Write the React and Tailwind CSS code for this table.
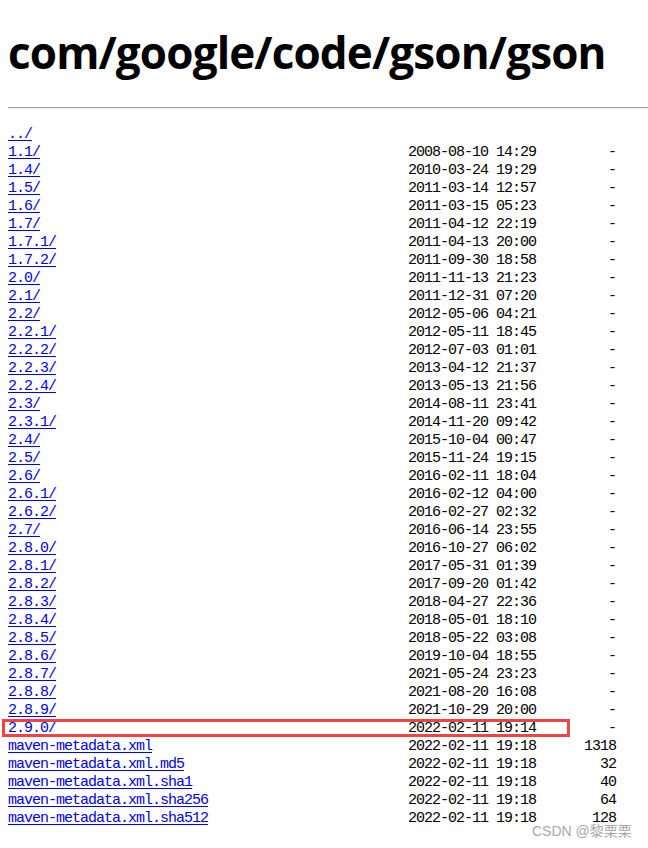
import React from 'react';

const rows = [
  ['../', '', ''],
  ['1.1/', '2008-08-10 14:29', '-'],
  ['1.4/', '2010-03-24 19:29', '-'],
  ['1.5/', '2011-03-14 12:57', '-'],
  ['1.6/', '2011-03-15 05:23', '-'],
  ['1.7/', '2011-04-12 22:19', '-'],
  ['1.7.1/', '2011-04-13 20:00', '-'],
  ['1.7.2/', '2011-09-30 18:58', '-'],
  ['2.0/', '2011-11-13 21:23', '-'],
  ['2.1/', '2011-12-31 07:20', '-'],
  ['2.2/', '2012-05-06 04:21', '-'],
  ['2.2.1/', '2012-05-11 18:45', '-'],
  ['2.2.2/', '2012-07-03 01:01', '-'],
  ['2.2.3/', '2013-04-12 21:37', '-'],
  ['2.2.4/', '2013-05-13 21:56', '-'],
  ['2.3/', '2014-08-11 23:41', '-'],
  ['2.3.1/', '2014-11-20 09:42', '-'],
  ['2.4/', '2015-10-04 00:47', '-'],
  ['2.5/', '2015-11-24 19:15', '-'],
  ['2.6/', '2016-02-11 18:04', '-'],
  ['2.6.1/', '2016-02-12 04:00', '-'],
  ['2.6.2/', '2016-02-27 02:32', '-'],
  ['2.7/', '2016-06-14 23:55', '-'],
  ['2.8.0/', '2016-10-27 06:02', '-'],
  ['2.8.1/', '2017-05-31 01:39', '-'],
  ['2.8.2/', '2017-09-20 01:42', '-'],
  ['2.8.3/', '2018-04-27 22:36', '-'],
  ['2.8.4/', '2018-05-01 18:10', '-'],
  ['2.8.5/', '2018-05-22 03:08', '-'],
  ['2.8.6/', '2019-10-04 18:55', '-'],
  ['2.8.7/', '2021-05-24 23:23', '-'],
  ['2.8.8/', '2021-08-20 16:08', '-'],
  ['2.8.9/', '2021-10-29 20:00', '-'],
  ['2.9.0/', '2022-02-11 19:14', '-'],
  ['maven-metadata.xml', '2022-02-11 19:18', '1318'],
  ['maven-metadata.xml.md5', '2022-02-11 19:18', '32'],
  ['maven-metadata.xml.sha1', '2022-02-11 19:18', '40'],
  ['maven-metadata.xml.sha256', '2022-02-11 19:18', '64'],
  ['maven-metadata.xml.sha512', '2022-02-11 19:18', '128'],
];

export default function App() {
  return (
    <div className="relative min-h-[848px] bg-white pl-2 text-black">
      <h1 className="pt-[22px] font-['Open_Sans','Noto_Sans',sans-serif] text-[44px] font-bold leading-[60px] tracking-[-0.85px]">
        com/google/code/gson/gson
      </h1>
      <hr className="mt-[25px] border-0 border-t border-b border-t-[#a0a0a0] border-b-[#eeeeee]" />
      <div className="mt-[17px] font-['Liberation_Mono',monospace] text-[15px] leading-[18px] tracking-[-1px]">
        {rows.map(([name, date, size]) => (
          <div key={name} className="relative flex h-[18px] whitespace-pre">
            <div className="w-[400px]">
              <a href="#" className="text-[#0000ee] underline underline-offset-2">
                {name}
              </a>
            </div>
            <div className="w-[128px]">{date}</div>
            <div className="w-[80px] text-right">{size}</div>
            {name === '2.9.0/' && (
              <div className="absolute left-[-6px] top-[-1px] h-[18px] w-[568px] border-[3px] border-[#f04444]" />
            )}
          </div>
        ))}
      </div>
      <div className="absolute left-[532px] top-[823px] font-['Liberation_Sans','Noto_Sans_CJK_SC',sans-serif] text-[14px] leading-[16px] text-[#a8a8a8]">
        CSDN @黎栗栗
      </div>
    </div>
  );
}
